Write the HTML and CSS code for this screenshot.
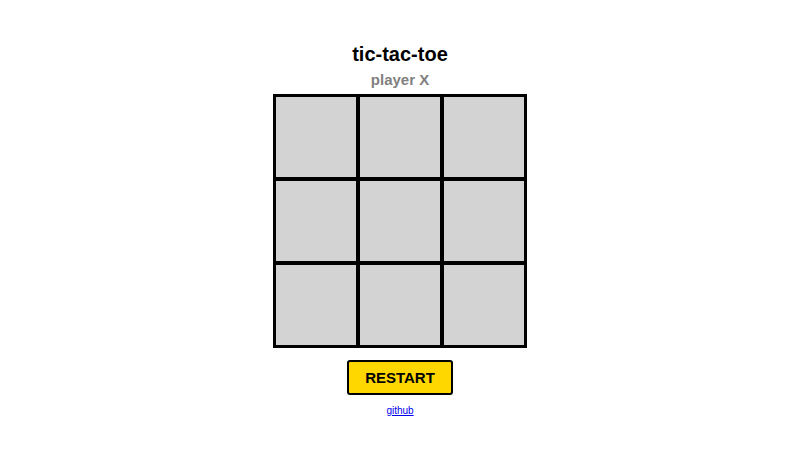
FILE: index.html
```html
<!DOCTYPE html>
<html lang="en">
<head>
    <meta charset="UTF-8">
    <title>tic-tac-toe</title>
    <link rel="stylesheet" href="styles.css">
</head>
<body>
    <div id="game">
        <h1 class="title">tic-tac-toe</h1>
        <div class="status">player X</div>
        <div class="board">
            <div class="cell"></div>
            <div class="cell"></div>
            <div class="cell"></div>
            <div class="cell"></div>
            <div class="cell"></div>
            <div class="cell"></div>
            <div class="cell"></div>
            <div class="cell"></div>
            <div class="cell"></div>
        </div>
        <button class="restart" type="button">RESTART</button>
        <a class="source" href="#">github</a>
    </div>
    <script>
        var cells = document.querySelectorAll('.cell');
        var player = 'X';
        var status = document.querySelector('.status');
        //Ставим ход в пустую клетку и передаём ход
        for (var i = 0; i < cells.length; i++) {
            cells[i].onclick = function(){
                if (this.innerHTML) return;
                this.innerHTML = player;
                player = player == 'X' ? 'O' : 'X';
                status.innerHTML = 'player ' + player;
            };
        };
        document.querySelector('.restart').onclick = function(){
            for (var i = 0; i < cells.length; i++) {
                cells[i].innerHTML = '';
            };
            player = 'X';
            status.innerHTML = 'player X';
        };
    </script>
</body>
</html>
```
FILE: styles.css
```css
body {
    margin: 0;
    font-family: "Liberation Sans", Arial, sans-serif;
    background: #fff;
}
#game {
    display: flex;
    flex-direction: column;
    align-items: center;
    padding-top: 42px;
}
.title {
    margin: 0;
    font-size: 20px;
    line-height: 24px;
    font-weight: bold;
    color: #000;
}
.status {
    margin-top: 5px;
    margin-bottom: 5px;
    font-size: 15px;
    line-height: 18px;
    font-weight: bold;
    color: #808080;
}
.board {
    display: grid;
    grid-template-columns: repeat(3, 84px);
    border: 1px solid #000;
}
.cell {
    width: 80px;
    height: 80px;
    border: 2px solid #000;
    background-color: #d3d3d3;
    font-size: 48px;
    font-weight: bold;
    line-height: 80px;
    text-align: center;
    cursor: pointer;
}
.restart {
    margin-top: 12px;
    width: 106px;
    height: 35px;
    padding: 0;
    border: 2px solid #000;
    border-radius: 3px;
    background-color: #ffd700;
    font-family: "Liberation Sans", Arial, sans-serif;
    font-size: 15px;
    font-weight: bold;
    color: #000;
    cursor: pointer;
}
.source {
    margin-top: 10px;
    font-size: 10px;
    line-height: 12px;
    color: #00e;
}
```
